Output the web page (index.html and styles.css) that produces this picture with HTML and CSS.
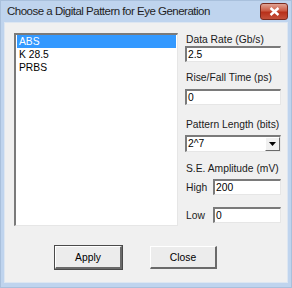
FILE: index.html
```html
<!DOCTYPE html>
<html lang="en">
<head>
  <meta charset="UTF-8" />
  <title>Choose a Digital Pattern for Eye Generation</title>
  <link rel="stylesheet" href="styles.css">
</head>
<body>

  <div class="window">
    <div class="titlebar">
      <span class="title">Choose a Digital Pattern for Eye Generation</span>
      <div class="close-x">
        <svg width="11" height="9" viewBox="0 0 11 9">
          <path d="M1.5 1 L9.5 8 M9.5 1 L1.5 8" stroke="#fff" stroke-width="2.4" />
        </svg>
      </div>
    </div>

    <div class="client">
      <div class="main">
        <ul class="listbox">
          <li class="selected">ABS</li>
          <li>K 28.5</li>
          <li>PRBS</li>
        </ul>

        <div class="fields">
          <label class="lbl lbl-rate">Data Rate (Gb/s)</label>
          <div class="edit">2.5</div>

          <label class="lbl lbl-rise">Rise/Fall Time (ps)</label>
          <div class="edit">0</div>

          <label class="lbl lbl-len">Pattern Length (bits)</label>
          <div class="combo">
            <span class="combo-text">2^7</span>
            <span class="combo-btn">
              <svg width="7" height="4" viewBox="0 0 7 4"><path d="M0 0 H7 L3.5 4 Z" fill="#000" /></svg>
            </span>
          </div>

          <label class="lbl lbl-amp">S.E. Amplitude (mV)</label>
          <div class="pair pair-high">
            <span>High</span>
            <div class="edit short">200</div>
          </div>
          <div class="pair pair-low">
            <span>Low</span>
            <div class="edit short">0</div>
          </div>
        </div>
      </div>

      <div class="buttons">
        <button class="btn default">Apply</button>
        <button class="btn">Close</button>
      </div>
    </div>
  </div>

</body>
</html>
```

FILE: styles.css
```css
* { margin: 0; padding: 0; box-sizing: border-box; }
body {
  background: #fff;
  font-family: "Liberation Sans", Arial, sans-serif;
  font-size: 10.3px;
  color: #000;
  white-space: nowrap;
}

.window {
  width: 292px;
  height: 288px;
  background: #bfd4ee;
  border: 1px solid #a9c0dc;
  padding: 0 3px 4px 3px;
  display: flex;
  flex-direction: column;
}

.titlebar {
  height: 21px;
  display: flex;
  align-items: flex-start;
  justify-content: space-between;
}

.title {
  font-size: 11.5px;
  letter-spacing: -0.5px;
  color: #1e1e1e;
  padding: 4px 0 0 3px;
}

.close-x {
  width: 28px;
  height: 17px;
  margin-top: 2px;
  margin-right: 0;
  border: 1px solid #7b2a1e;
  border-radius: 3px;
  background: linear-gradient(#e0a394, #cc5a43 45%, #b8301a 55%, #c4503a);
  display: flex;
  align-items: center;
  justify-content: center;
}

.client {
  flex: 1;
  background: #f0f0f0;
  border: 1px solid #dde6f1;
  display: flex;
  flex-direction: column;
  padding: 10px 6px 0 9px;
}

.main {
  display: flex;
  gap: 7px;
}

.listbox {
  list-style: none;
  width: 164px;
  height: 193px;
  background: #fff;
  border-top: 2px solid #7a7a7a;
  border-left: 2px solid #7a7a7a;
  border-right: 1px solid #e6e6e6;
  border-bottom: 1px solid #e6e6e6;
  padding: 0 1px;
}

.listbox li {
  height: 13px;
  line-height: 13px;
  padding-left: 2px;
}

.listbox li.selected {
  background: #3399ff;
  color: #fff;
}

.fields {
  width: 96px;
  display: flex;
  flex-direction: column;
}

.lbl {
  display: block;
  height: 13px;
  line-height: 13px;
  padding-left: 1px;
  color: #1a1a1a;
}

.lbl-rise { margin-top: 9px; }
.lbl-len { margin-top: 13px; }
.lbl-amp { margin-top: 10px; }

.edit {
  height: 16px;
  line-height: 13px;
  background: #fff;
  border-top: 2px solid #7a7a7a;
  border-left: 2px solid #7a7a7a;
  border-right: 1px solid #e6e6e6;
  border-bottom: 1px solid #e6e6e6;
  padding-left: 1px;
}

.lbl-rise + .edit { margin-top: 5px; }

.combo {
  height: 17px;
  margin-top: 4px;
  display: flex;
  background: #fff;
  border-top: 2px solid #7a7a7a;
  border-left: 2px solid #7a7a7a;
  border-right: 1px solid #e6e6e6;
  border-bottom: 1px solid #e6e6e6;
}

.combo-text {
  flex: 1;
  line-height: 13px;
  padding-left: 1px;
}

.combo-btn {
  width: 15px;
  background: #f0f0f0;
  border-top: 1px solid #fff;
  border-left: 1px solid #fff;
  border-right: 1px solid #6a6a6a;
  border-bottom: 1px solid #6a6a6a;
  display: flex;
  align-items: center;
  justify-content: center;
}

.pair {
  display: flex;
  align-items: center;
  justify-content: space-between;
  padding-left: 1px;
}

.pair span { color: #1a1a1a; }

.pair-high { margin-top: 4px; }
.pair-low { margin-top: 12px; }

.edit.short { width: 68px; }

.buttons {
  display: flex;
  gap: 28px;
  margin-top: 20px;
  padding-left: 41px;
}

.btn {
  width: 67px;
  height: 23px;
  font-family: "Liberation Sans", Arial, sans-serif;
  font-size: 10.3px;
  color: #000;
  background: #ececec;
  border-top: 1px solid #fff;
  border-left: 1px solid #fff;
  border-right: 2px solid #6a6a6a;
  border-bottom: 2px solid #6a6a6a;
}

.btn.default {
  outline: 1px solid #4a4a4a;
}
```
